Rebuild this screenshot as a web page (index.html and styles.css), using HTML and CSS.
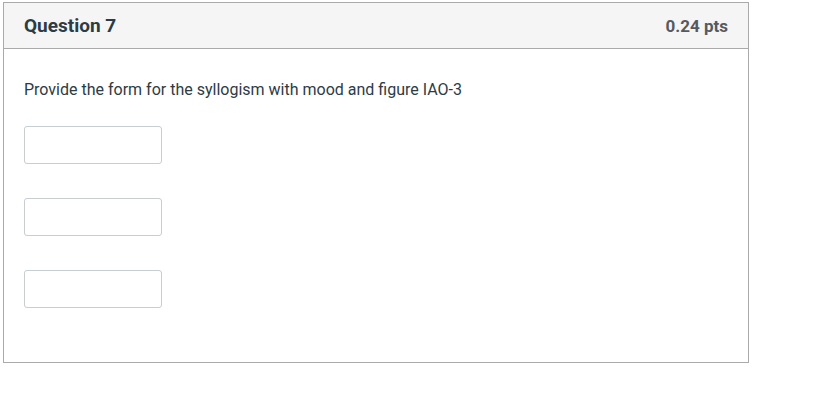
FILE: index.html
```html
<!DOCTYPE html>
<html>
<head>
<meta charset="utf-8">
<link rel="stylesheet" href="styles.css">
</head>
<body>
<div class="page">
  <div class="question">
    <div class="q-header">
      <h2 class="q-title">Question 7</h2>
      <span class="q-points">0.24 pts</span>
    </div>
    <div class="q-body">
      <p class="q-text">Provide the form for the syllogism with mood and figure IAO-3</p>
      <div class="answers">
        <input class="answer" type="text">
        <input class="answer" type="text">
        <input class="answer" type="text">
      </div>
    </div>
  </div>
</div>
</body>
</html>
```

FILE: styles.css
```css
html, body {
  margin: 0;
  padding: 0;
  background: #ffffff;
}
body {
  font-family: Roboto, "Liberation Sans", Arial, sans-serif;
  color: #2d3b45;
}
.page {
  padding: 2px 0 0 3px;
}
.question {
  width: 744px;
  height: 359px;
  border: 1px solid #aaaaaa;
  display: flex;
  flex-direction: column;
}
.q-header {
  height: 45px;
  background: #f5f5f5;
  border-bottom: 1px solid #aaaaaa;
  display: flex;
  align-items: center;
  justify-content: space-between;
  padding: 0 20px;
}
.q-title {
  margin: 0;
  font-size: 19px;
  font-weight: 700;
  line-height: 24px;
  color: #2d3b45;
}
.q-points {
  font-size: 17px;
  font-weight: 700;
  line-height: 24px;
  color: #555a5f;
}
.q-body {
  padding: 29px 20px 0 20px;
}
.q-text {
  margin: 0;
  font-size: 16px;
  line-height: 24px;
  color: #2d3b45;
}
.answers {
  margin-top: 24px;
  display: flex;
  flex-direction: column;
  gap: 34px;
  align-items: flex-start;
}
.answer {
  box-sizing: border-box;
  width: 138px;
  height: 38px;
  margin: 0;
  border: 1px solid #c7cdd1;
  border-radius: 3px;
  background: #ffffff;
  padding: 0 8px;
  font-family: inherit;
  font-size: 16px;
}
```
